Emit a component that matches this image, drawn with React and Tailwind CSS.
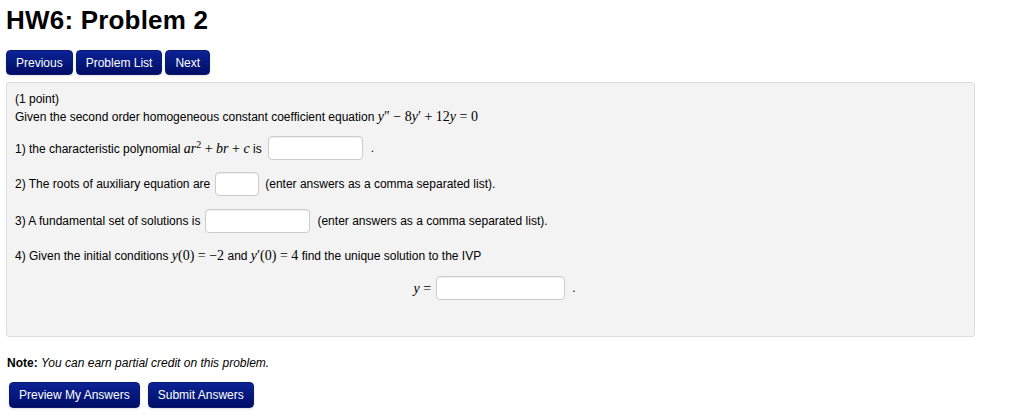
import React from "react";

const navBtn =
  "h-[25px] px-[9px] rounded-[4px] border border-[#0a1a70] bg-gradient-to-b from-[#0d2296] to-[#000e66] text-white text-[12px] leading-none shadow-sm";

const Field = ({ w }) => (
  <span
    className={`inline-block align-middle h-[24px] ${w} bg-white border border-[#cccccc] rounded-[4px] shadow-[inset_0_1px_1px_rgba(0,0,0,0.075)]`}
  />
);

const M = ({ children }) => (
  <span className="font-['Liberation_Serif',serif] text-[14px]">{children}</span>
);

export default function App() {
  return (
    <div className="w-[1024px] h-[419px] bg-white text-black font-['Liberation_Sans',Arial,sans-serif] px-[6px] overflow-hidden">
      <h1 className="pt-[6px] text-[26px] leading-[28px] font-bold tracking-[0.2px]">HW6: Problem 2</h1>

      <div className="flex gap-[3px] mt-[16px]">
        <button className={navBtn}>Previous</button>
        <button className={navBtn}>Problem List</button>
        <button className={navBtn}>Next</button>
      </div>

      <div className="mt-[7px] w-[969px] h-[255px] bg-[#f3f3f3] border border-[#dddddd] rounded-[3px] px-[8px] pt-[8px] text-[12px]">
        <div className="leading-[17px]">(1 point)</div>
        <div className="leading-[17px]">
          Given the second order homogeneous constant coefficient equation{" "}
          <M>
            <i>y</i>″ − 8<i>y</i>′ + 12<i>y</i> = 0
          </M>
        </div>

        <div className="mt-[10px] flex items-center gap-[6px] h-[24px]">
          <span>
            1) the characteristic polynomial{" "}
            <M>
              <i>ar</i>
              <sup className="text-[10px]">2</sup> + <i>br</i> + <i>c</i>
            </M>{" "}
            is
          </span>
          <Field w="w-[95px]" />
          <span className="ml-[2px]">.</span>
        </div>

        <div className="mt-[12px] flex items-center gap-[5px] h-[24px]">
          <span>2) The roots of auxiliary equation are</span>
          <Field w="w-[44px]" />
          <span className="ml-[1px]">(enter answers as a comma separated list).</span>
        </div>

        <div className="mt-[13px] flex items-center gap-[5px] h-[24px]">
          <span>3) A fundamental set of solutions is</span>
          <Field w="w-[105px]" />
          <span className="ml-[2px]">(enter answers as a comma separated list).</span>
        </div>

        <div className="mt-[14px] leading-[17px]">
          4) Given the initial conditions{" "}
          <M>
            <i>y</i>(0) = −2
          </M>{" "}
          and{" "}
          <M>
            <i>y</i>′(0) = 4
          </M>{" "}
          find the unique solution to the IVP
        </div>

        <div className="mt-[11px] flex items-center justify-center gap-[5px] h-[24px] pl-[8px]">
          <M>
            <i>y</i> =
          </M>
          <Field w="w-[129px]" />
          <span className="ml-[2px]">.</span>
        </div>
      </div>

      <div className="mt-[18px] text-[12px] leading-[17px] pl-[1px]">
        <b>Note:</b> <i>You can earn partial credit on this problem.</i>
      </div>

      <div className="flex gap-[8px] mt-[10px] pl-[3px]">
        <button className={`${navBtn} h-[26px] px-[8px]`}>Preview My Answers</button>
        <button className={`${navBtn} h-[26px] px-[8px]`}>Submit Answers</button>
      </div>
    </div>
  );
}
